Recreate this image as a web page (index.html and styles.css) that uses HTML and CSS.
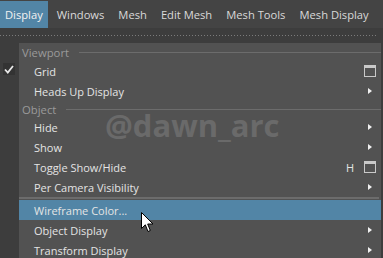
FILE: index.html
```html
<!DOCTYPE html>
<html lang="en">
<head>
    <meta charset="UTF-8">
    <title>Display menu</title>
    <link rel="stylesheet" href="styles.css">
</head>
<body>
    <div class="menubar">
        <span class="menubar-item active">Display</span>
        <span class="menubar-item">Windows</span>
        <span class="menubar-item">Mesh</span>
        <span class="menubar-item">Edit Mesh</span>
        <span class="menubar-item">Mesh Tools</span>
        <span class="menubar-item">Mesh Display</span>
    </div>

    <div class="tearoff">
        <div class="tearoff-dots"></div>
    </div>

    <div class="menu">
        <div class="section">
            <span class="section-label">Viewport</span>
            <span class="section-line"></span>
        </div>
        <div class="item">
            <span class="check">
                <svg width="10" height="9" viewBox="0 0 10 9"><path d="M1 4.5 L3.8 7.5 L9 1" fill="none" stroke="#e8e8e8" stroke-width="1.8"/></svg>
            </span>
            <span class="label">Grid</span>
            <span class="optbox"></span>
        </div>
        <div class="item">
            <span class="label">Heads Up Display</span>
            <span class="arrow"></span>
        </div>
        <div class="section section-small">
            <span class="section-label">Object</span>
            <span class="section-line"></span>
        </div>
        <div class="item">
            <span class="label">Hide</span>
            <span class="arrow"></span>
        </div>
        <div class="item">
            <span class="label">Show</span>
            <span class="arrow"></span>
        </div>
        <div class="item">
            <span class="label">Toggle Show/Hide</span>
            <span class="hotkey">H</span>
            <span class="optbox"></span>
        </div>
        <div class="item">
            <span class="label">Per Camera Visibility</span>
            <span class="arrow"></span>
        </div>
        <div class="divider"></div>
        <div class="item hover">
            <span class="label">Wireframe Color...</span>
        </div>
        <div class="item">
            <span class="label">Object Display</span>
            <span class="arrow"></span>
        </div>
        <div class="item">
            <span class="label">Transform Display</span>
            <span class="arrow"></span>
        </div>

        <div class="watermark">@dawn_arc</div>

        <svg class="cursor" width="13" height="21" viewBox="0 0 13 21">
            <path d="M0.5 0.5 L0.5 16.5 L4.3 12.8 L7 19.5 L9.3 18.5 L6.7 12 L12 12 Z" fill="#fff" stroke="#000" stroke-width="1"/>
        </svg>
    </div>
</body>
</html>
```

FILE: styles.css
```css
* {
    margin: 0;
    padding: 0;
    box-sizing: border-box;
}

body {
    font-family: 'Open Sans', 'Noto Sans', sans-serif;
    font-size: 11px;
    background: #3d3d3d;
    width: 383px;
    height: 258px;
    overflow: hidden;
    color: #dddddd;
}

.menubar {
    display: flex;
    gap: 4px;
    height: 28px;
    padding-top: 1px;
    background: #444444;
}

.menubar-item {
    height: 27px;
    padding: 0 5px;
    line-height: 27px;
    font-size: 11.2px;
    color: #d9d9d9;
}

.menubar-item.active {
    background: #5285a6;
    color: #f2f2f2;
}

.tearoff {
    height: 15px;
    padding: 7px 5px 0 0;
    background: #3d3d3d;
}

.tearoff-dots {
    height: 1px;
    background: repeating-linear-gradient(90deg, #7b7b7b 0 1px, transparent 1px 3px);
}

.menu {
    position: relative;
    margin-left: 19px;
    margin-right: 2px;
    background: #525252;
    height: 215px;
}

.section {
    display: flex;
    align-items: center;
    height: 18px;
    padding-left: 3px;
}

.section-small {
    height: 16px;
}

.section-label {
    color: #9a9a9a;
    font-size: 11.3px;
}

.section-line {
    flex: 1;
    height: 1px;
    margin-left: 10px;
    background: #6c6c6c;
}

.item {
    position: relative;
    display: flex;
    align-items: center;
    height: 20px;
    padding: 0 5px 0 15px;
}

.item.hover {
    background: #5285a6;
}

.label {
    flex: 1;
    color: #e4e4e4;
}

.hotkey {
    width: 18px;
    color: #e4e4e4;
}

.check {
    position: absolute;
    left: -16px;
    top: 2px;
    width: 12px;
    height: 12px;
    background: #333333;
    display: flex;
    align-items: center;
    justify-content: center;
}

.optbox {
    width: 12px;
    height: 12px;
    border: 1px solid #c9c9c9;
    border-top-width: 3px;
}

.arrow {
    width: 0;
    height: 0;
    margin-right: 4px;
    border-top: 3.5px solid transparent;
    border-bottom: 3.5px solid transparent;
    border-left: 4px solid #f0f0f0;
}

.divider {
    height: 3px;
    border-top: 2px solid #6c6c6c;
    margin: 0 2px 0 0;
}

.watermark {
    position: absolute;
    left: 86px;
    top: 61px;
    font-family: 'Open Sans', sans-serif;
    font-weight: bold;
    font-size: 31px;
    color: #6a6a6a;
}

.cursor {
    position: absolute;
    left: 122px;
    top: 169px;
}
```
